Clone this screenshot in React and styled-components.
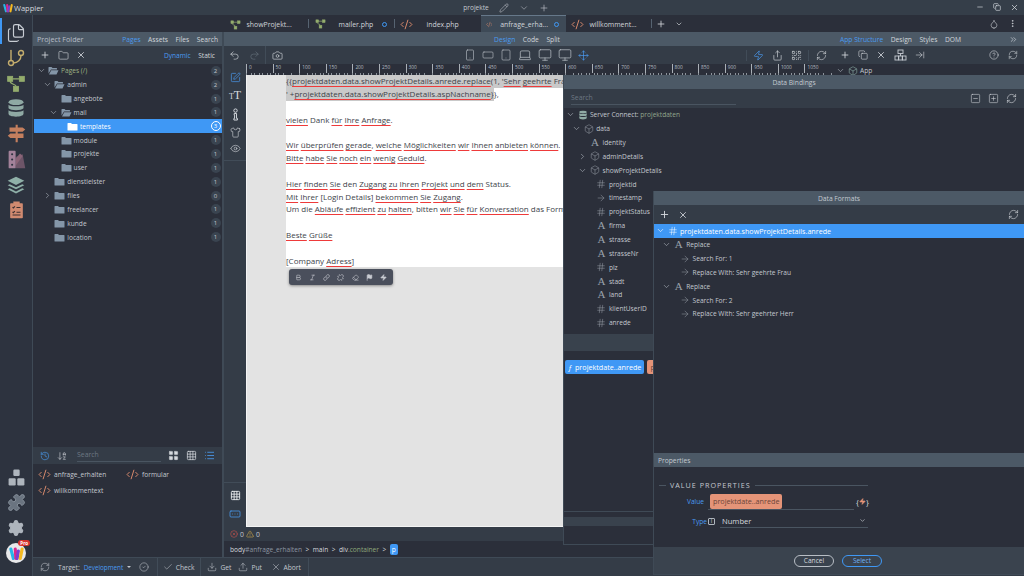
import React from "react";
import styled, { createGlobalStyle } from "styled-components";
import {
  Plus, X, ChevronDown, ChevronRight, Pencil, Minus, Copy, Droplet, EllipsisVertical, CodeXml,
  Undo2, Redo2, Camera, Smartphone, RectangleHorizontal, Tablet, Laptop, Monitor, Move, Zap,
  Share, QrCode, RefreshCw, CircleHelp, ArrowRightToLine, ChevronsRight, SquarePen, Shirt, Eye,
  Grid3x3, RectangleEllipsis, CircleX, TriangleAlert, History, ArrowDownAZ, LayoutGrid, List,
  Check, CircleCheck, Download, Upload, SquareMinus, SquarePlus, Box, Hash, ArrowRight, Bold,
  Italic, Link, Unlink, Eraser, Flag, Settings, Puzzle, Files, GitBranch, Folder,
} from "lucide-react";

const dark = "#2b2f3a";
const bar = "#343c47";
const head = "#4c5966";
const line = "#3f4a56";
const blue = "#3f98f5";
const salmon = "#e59478";
const soft = "#c3c8cf";

const GlobalStyle = createGlobalStyle`
  html, body {
    margin: 0;
    background: ${dark};
    font-family: "Open Sans", "Liberation Sans", sans-serif;
  }
`;

const Page = styled.div`
  position: relative;
  width: 1024px;
  height: 576px;
  overflow: hidden;
  display: flex;
  flex-direction: column;
  font-size: 6.6px;
  color: ${soft};
  background: ${dark};
`;

const TitleBar = styled.div`
  height: 15px;
  flex: none;
  background: #353e49;
  display: grid;
  grid-template-columns: 1fr auto 1fr;
  align-items: center;
  padding: 0 5px 0 3px;
`;

const Brand = styled.div`
  display: flex;
  align-items: center;
  gap: 1px;
  font-size: 7.5px;
  color: #d5d9de;
`;

const TitleCenter = styled.div`
  display: flex;
  align-items: center;
  gap: 10px;
  margin-right: 10px;
`;

const WinButtons = styled.div`
  display: flex;
  justify-content: flex-end;
  gap: 9px;
  color: #d5d9de;
`;

const Body = styled.div`
  flex: 1;
  min-height: 0;
  display: flex;
`;

const Rail = styled.div`
  width: 33px;
  flex: none;
  box-sizing: border-box;
  background: #2d333f;
  border-right: 1px solid ${line};
  display: flex;
  flex-direction: column;
  justify-content: space-between;
  align-items: center;
  padding: 8px 0 13px;
  position: relative;
`;

const RailGroup = styled.div`
  display: flex;
  flex-direction: column;
  align-items: center;
  gap: ${(p) => p.$gap}px;
`;

const RailMark = styled.div`
  position: absolute;
  left: 0;
  top: 3px;
  width: 1.5px;
  height: 26px;
  background: ${blue};
`;

const ProBadge = styled.span`
  position: absolute;
  right: -4px;
  top: -3px;
  background: #d8342f;
  color: #fff;
  border-radius: 4px;
  font-size: 4.5px;
  line-height: 6px;
  padding: 0 2px;
  font-weight: 700;
`;

const LogoDisc = styled.div`
  position: relative;
  width: 20px;
  height: 20px;
  border-radius: 50%;
  background: #e8e8ea;
  display: flex;
  align-items: center;
  justify-content: center;
`;

const Workspace = styled.div`
  flex: 1;
  min-width: 0;
  display: flex;
  flex-direction: column;
`;

const TabStrip = styled.div`
  height: 17px;
  flex: none;
  background: ${dark};
  display: flex;
  align-items: stretch;
  padding-left: 195px;
  font-size: 6.9px;
`;

const Tab = styled.div`
  width: ${(p) => p.$w}px;
  flex: none;
  box-sizing: border-box;
  display: flex;
  align-items: center;
  gap: 6px;
  padding-left: ${(p) => p.$lead ?? 3}px;
  color: #d2d6db;
  background: ${(p) => (p.$active ? "#3e4a57" : "transparent")};
  border-top: 1px solid ${(p) => (p.$active ? "#66788a" : "transparent")};
  white-space: nowrap;
  span {
    flex: 1;
    padding-left: ${(p) => p.$pad || 0}px;
  }
`;

const TabDot = styled.i`
  width: 3px;
  height: 3px;
  border-radius: 50%;
  border: 1px solid ${blue};
  margin-right: 7px;
  flex: none;
`;

const TabDivider = styled.i`
  width: 1px;
  height: 9px;
  align-self: center;
  background: #566371;
  flex: none;
  margin-right: ${(p) => p.$right || 0}px;
`;

const TabIcon = styled.span`
  display: flex;
  align-items: center;
  flex: none;
  margin-left: ${(p) => p.$left || 0}px;
  color: #d2d6db;
`;

const StripEnd = styled.div`
  display: flex;
  align-items: center;
  margin-left: auto;
  gap: 9px;
  padding-right: 7px;
  color: #d2d6db;
`;

const Panels = styled.div`
  flex: 1;
  min-height: 0;
  display: flex;
  background: ${line};
`;

const SidePanel = styled.div`
  width: ${(p) => p.$w}px;
  flex: none;
  display: flex;
  flex-direction: column;
  background: ${dark};
  margin-right: ${(p) => p.$right || 0}px;
`;

const HeadRow = styled.div`
  height: 14px;
  flex: none;
  background: ${head};
  display: flex;
  align-items: center;
  justify-content: ${(p) => p.$justify || "flex-start"};
  padding: 0 ${(p) => p.$pad ?? 4}px;
  gap: 7.5px;
  color: #c4cad1;
  font-size: 6.7px;
`;

const HeadTitle = styled.span`
  margin-right: auto;
  color: #b7bec6;
  font-size: 7.2px;
`;

const HeadLink = styled.span`
  color: ${(p) => (p.$on ? "#4a9bf0" : "#d2d6db")};
`;

const ToolRow = styled.div`
  height: ${(p) => p.$h ?? 18}px;
  flex: none;
  background: ${bar};
  display: flex;
  align-items: center;
  padding: 0 ${(p) => p.$pad ?? 7}px;
  gap: ${(p) => p.$gap ?? 8}px;
  color: #d5d9de;
`;

const Push = styled.div`
  margin-left: auto;
  display: flex;
  align-items: center;
  gap: ${(p) => p.$gap ?? 8}px;
`;

const TreeList = styled.div`
  flex: ${(p) => (p.$h ? "none" : 1)};
  height: ${(p) => (p.$h ? `${p.$h}px` : "auto")};
  overflow: hidden;
  padding-left: ${(p) => p.$left || 0}px;
`;

const Row = styled.div`
  height: 13.85px;
  display: flex;
  align-items: center;
  position: relative;
  white-space: nowrap;
  padding-left: ${(p) => p.$level * 6.3 + (p.$base || 0)}px;
  background: ${(p) => (p.$on ? blue : "transparent")};
  color: ${(p) => (p.$on ? "#fff" : soft)};
`;

const SelectedText = styled.span`
  font-size: 7.15px;
  padding-left: 1px;
`;

const Chev = styled.span`
  width: 12px;
  flex: none;
  display: flex;
  justify-content: center;
  color: ${(p) => (p.$on ? "#fff" : "#aeb5bd")};
`;

const Glyph = styled.span`
  width: 13px;
  flex: none;
  display: flex;
  justify-content: center;
  color: ${(p) => p.$color || "#9aa1aa"};
`;

const SerifA = styled.span`
  font-family: "Liberation Serif", serif;
  font-size: 11px;
  line-height: 11px;
`;

const RowText = styled.span`
  padding-left: 1px;
  color: ${(p) => p.$color || "inherit"};
`;

const CutOffTip = styled.div`
  width: 1.5px;
  height: 1.5px;
  margin: 4px 0 0 37px;
  background: #9aa1aa;
`;

const Count = styled.span`
  position: absolute;
  right: 1.5px;
  width: 10px;
  height: 10px;
  border-radius: 50%;
  background: ${(p) => (p.$on ? "transparent" : "#3a4450")};
  border: ${(p) => (p.$on ? "1px solid #fff" : "none")};
  box-sizing: border-box;
  display: flex;
  align-items: center;
  justify-content: center;
  font-size: 6px;
  color: ${(p) => (p.$on ? "#fff" : "#c3c8cf")};
`;

const FilterRow = styled(ToolRow)`
  height: 17px;
  padding: 0 7px;
  gap: 7px;
  margin-top: auto;
`;

const SearchBox = styled.div`
  width: ${(p) => p.$w}px;
  height: 13px;
  line-height: 12px;
  box-sizing: border-box;
  border-bottom: 1px solid #4a5561;
  color: #6d7783;
  font-size: 6.9px;
  margin-left: ${(p) => p.$left || 0}px;
`;

const FileGrid = styled.div`
  height: 93px;
  flex: none;
  box-sizing: border-box;
  padding: 2px 5px;
  display: grid;
  grid-template-columns: 88px 1fr;
  grid-auto-rows: 16.5px;
`;

const FileItem = styled.div`
  display: flex;
  align-items: center;
  gap: 3px;
  color: #c3c8cf;
`;

const Editor = styled.div`
  flex: 1;
  min-width: 0;
  display: flex;
  flex-direction: column;
  background: ${dark};
`;

const ModeRow = styled(HeadRow)`
  justify-content: center;
  padding-left: 0;
`;

const EditorTools = styled(ToolRow)`
  padding: 0;
  gap: 0;
  position: relative;
`;

const ToolCell = styled.div`
  display: flex;
  align-items: center;
  gap: ${(p) => p.$gap ?? 10}px;
  padding: 0 ${(p) => p.$pad ?? 6}px;
  height: 100%;
  color: ${(p) => p.$color || "inherit"};
  margin-left: ${(p) => p.$left || 0}px;
  border-right: ${(p) => (p.$sep ? "1px solid #414c58" : "none")};
  border-left: ${(p) => (p.$sepLeft ? "1px solid #414c58" : "none")};
`;

const EditorMain = styled.div`
  flex: 1;
  min-height: 0;
  display: flex;
`;

const ToolRail = styled.div`
  width: 22px;
  flex: none;
  background: ${bar};
  display: flex;
  flex-direction: column;
  align-items: center;
`;

const RailTop = styled.div`
  width: 100%;
  padding: 8px 0 6px;
  display: flex;
  flex-direction: column;
  align-items: center;
  gap: 5.5px;
  border-bottom: 1px solid #414c58;
`;

const RailBottom = styled.div`
  margin-top: auto;
  width: 100%;
  padding: 7px 0 7px;
  display: flex;
  flex-direction: column;
  align-items: center;
  gap: 7px;
  border-top: 1px solid #414c58;
`;

const TTMark = styled.span`
  font-family: "Liberation Serif", serif;
  color: #d5d9de;
  font-size: 12px;
  line-height: 12px;
  small {
    font-size: 8px;
  }
`;

const Stage = styled.div`
  flex: 1;
  min-width: 0;
  display: flex;
  flex-direction: column;
`;

const Ruler = styled.div`
  height: 11px;
  flex: none;
  display: flex;
  background: repeating-linear-gradient(90deg, #8d949c 0 0.6px, transparent 0.6px 2.66px) bottom / 100% 2px no-repeat ${dark};
`;

const RulerMark = styled.span`
  width: 26.6px;
  flex: none;
  box-sizing: border-box;
  border-left: 1px solid #aab0b7;
  padding-left: 2px;
  font-size: 4.8px;
  line-height: 7px;
  color: #b6bcc3;
  height: 9px;
`;

const Canvas = styled.div`
  flex: 1;
  min-height: 0;
  position: relative;
  overflow: hidden;
  background: #e3e3e3;
  border-left: 1px solid #f4f4f4;
  border-bottom: 1px solid #f4f4f4;
  padding-left: 39px;
`;

const DocPage = styled.div`
  height: 192px;
  width: 540px;
  background: #fff;
  box-sizing: border-box;
  color: #40434a;
  font-size: 8px;
  font-family: "Open Sans", sans-serif;
`;

const DocLine = styled.div`
  height: 12.85px;
  line-height: 12.85px;
  white-space: nowrap;
  width: ${(p) => p.$w || "auto"};
  background: ${(p) => (p.$sel ? "#c9c9c9" : "transparent")};
`;

const Spell = styled.span`
  text-decoration: underline solid #ee3a3a 1px;
  text-underline-offset: 1.5px;
`;

const FloatBar = styled.div`
  position: absolute;
  left: 42px;
  top: 194px;
  width: 104px;
  height: 16px;
  box-sizing: border-box;
  border-radius: 3px;
  background: #4a4f5c;
  box-shadow: 0 1px 3px rgba(0, 0, 0, 0.4);
  color: #c9ccd2;
  display: flex;
  align-items: center;
  justify-content: space-around;
  padding: 0 2px;
`;

const ErrorRow = styled.div`
  height: 14px;
  flex: none;
  background: ${bar};
  display: flex;
  align-items: center;
  gap: 2px;
  padding-left: 6px;
  font-size: 6.8px;
  color: #c3c8cf;
`;

const Crumbs = styled.div`
  height: 16px;
  flex: none;
  background: ${dark};
  display: flex;
  align-items: center;
  padding-left: 6px;
  gap: 3.5px;
  color: #d5d9de;
  white-space: nowrap;
`;

const CrumbId = styled.span`
  color: ${(p) => p.$color};
`;

const CrumbPill = styled.span`
  background: ${blue};
  color: #fff;
  border-radius: 2px;
  padding: 1px 2px;
  line-height: 9px;
`;

const BottomBar = styled.div`
  height: 19px;
  flex: none;
  background: ${bar};
  border-top: 1px solid ${line};
  box-sizing: border-box;
  display: flex;
  align-items: center;
  color: #c3c8cf;
  padding-left: 7px;
  font-size: 6.7px;
`;

const BarItem = styled.div`
  display: flex;
  align-items: center;
  height: 100%;
  gap: ${(p) => p.$gap ?? 3}px;
  padding-right: ${(p) => p.$right ?? 0}px;
  margin-left: ${(p) => p.$left ?? 0}px;
  border-right: ${(p) => (p.$sep ? "1px solid #414c58" : "none")};
`;

const Target = styled.span`
  color: #4a9bf0;
  font-size: 6.3px;
`;

const Caret = styled.i`
  width: 0;
  height: 0;
  border-left: 2px solid transparent;
  border-right: 2px solid transparent;
  border-top: 2.5px solid #c3c8cf;
`;

/* floating windows of the app */
const Dialog = styled.div`
  position: absolute;
  left: ${(p) => p.$left}px;
  top: ${(p) => p.$top}px;
  right: 0;
  height: ${(p) => p.$h}px;
  box-sizing: border-box;
  background: ${dark};
  border-left: 1px solid ${line};
  border-bottom: 1px solid ${line};
  display: flex;
  flex-direction: column;
`;

const DialogBand = styled.div`
  height: ${(p) => p.$h}px;
  flex: none;
  background: #39424d;
  margin-top: ${(p) => p.$top || 0}px;
`;

const PillRow = styled.div`
  height: 161px;
  flex: none;
  box-sizing: border-box;
  padding: 9px 2px 0 1px;
  display: flex;
  gap: 3px;
  overflow: hidden;
  border-bottom: 1px solid ${line};
`;

const Pill = styled.div`
  height: ${(p) => p.$h ?? 14}px;
  flex: none;
  border-radius: 2px;
  display: flex;
  align-items: center;
  padding: 0 3px;
  gap: 3px;
  background: ${(p) => (p.$salmon ? salmon : blue)};
  color: ${(p) => (p.$salmon ? "#6b4438" : "#fff")};
  white-space: nowrap;
  font-size: 7.2px;
`;

const Footer = styled.div`
  height: 27px;
  flex: none;
  background: #3a434e;
  display: flex;
  align-items: center;
  justify-content: center;
  gap: 8px;
  padding-right: 2px;
`;

const RoundBtn = styled.div`
  width: 40px;
  height: 12px;
  box-sizing: border-box;
  border-radius: 6px;
  border: 1px solid ${(p) => (p.$primary ? blue : "#b8bec5")};
  color: ${(p) => (p.$primary ? "#6fb2f5" : "#d5d9de")};
  font-size: 6.6px;
  display: flex;
  align-items: center;
  justify-content: center;
`;

const PropBody = styled.div`
  flex: 1;
  min-height: 0;
  padding: 13px 0 0 5px;
  width: 209px;
`;

const Legend = styled.div`
  display: flex;
  align-items: center;
  gap: 4px;
  font-size: 7.2px;
  letter-spacing: 1px;
  height: 10px;
  color: #c3c8cf;
  margin-bottom: 3px;
  &::before {
    content: "";
    width: 7px;
    height: 1px;
    background: #4a5561;
  }
  &::after {
    content: "";
    flex: 1;
    height: 1px;
    background: #4a5561;
  }
`;

const PropRow = styled.div`
  display: flex;
  align-items: center;
  height: ${(p) => p.$h}px;
  margin-top: ${(p) => p.$top || 0}px;
`;

const PropLabel = styled.span`
  width: ${(p) => p.$w}px;
  flex: none;
  text-align: right;
  color: #4a9bf0;
  padding-right: ${(p) => p.$right}px;
  box-sizing: border-box;
`;

const PropField = styled.div`
  flex: ${(p) => (p.$grow ? 1 : "none")};
  width: ${(p) => p.$w || "auto"};
  display: flex;
  align-items: center;
  height: 100%;
  box-sizing: border-box;
  border-bottom: 1px solid #4a5561;
  justify-content: space-between;
  color: #d5d9de;
  font-size: 7.6px;
  padding: 0 2px;
`;

const BraceIcon = styled.span`
  display: flex;
  align-items: center;
  color: #d5d9de;
  margin-left: 2px;
  font-size: 8px;
`;

const TypeBox = styled.span`
  width: 7px;
  height: 7px;
  border: 1px solid #aeb5bd;
  border-radius: 1px;
  box-sizing: border-box;
  font-size: 5px;
  line-height: 5px;
  text-align: center;
  margin-right: 5px;
  color: #d5d9de;
  flex: none;
`;

const WapplerMark = ({ size = 12 }) => (
  <svg width={size} height={size} viewBox="0 0 24 24">
    <path d="M3 5 L7 20" stroke="#27b5e8" strokeWidth="5" strokeLinecap="round" />
    <path d="M10 5 L11 20" stroke="#d9288c" strokeWidth="5" strokeLinecap="round" />
    <path d="M13 20 L15 8" stroke="#7a3fd0" strokeWidth="5" strokeLinecap="round" />
    <path d="M18 20 L21 5" stroke="#f4b920" strokeWidth="5" strokeLinecap="round" />
  </svg>
);

const NetworkIcon = ({ size = 20, color = "#94ad6d" }) => (
  <svg width={size} height={size} viewBox="0 0 24 24" fill={color} stroke={color}>
    <rect x="2" y="4" width="6" height="6" />
    <rect x="16" y="4" width="6" height="6" />
    <rect x="9" y="16" width="6" height="6" />
    <path d="M8 7h8M5 10c0 4 7 3 7 6" fill="none" strokeWidth="1.5" />
  </svg>
);

const StructureIcon = () => (
  <svg width="13" height="12" viewBox="0 0 26 24" fill="none" stroke="#c7ccd3" strokeWidth="1.8">
    <rect x="8" y="2" width="10" height="7" />
    <rect x="2" y="14" width="7" height="8" />
    <rect x="9.5" y="14" width="7" height="8" />
    <rect x="17" y="14" width="7" height="8" />
    <path d="M13 9v5" />
  </svg>
);

const DbIcon = ({ size = 20, color = "#8fa9a4" }) => (
  <svg width={size} height={size} viewBox="0 0 24 24" fill={color}>
    <ellipse cx="12" cy="5" rx="9" ry="3.5" />
    <path d="M3 8c2 2.4 16 2.4 18 0v4.4c-2 3-16 3-18 0zM3 14.8c2 2.6 16 2.6 18 0v4.2c0 2-4 3.5-9 3.5s-9-1.5-9-3.5z" />
  </svg>
);

const SignIcon = () => (
  <svg width="21" height="21" viewBox="0 0 24 24" fill="#c47f5e">
    <rect x="11" y="2" width="2.4" height="20" />
    <path d="M4 5h15l3 2.5-3 2.5H4zM20 12H5l-3 2.5L5 17h15z" />
  </svg>
);

const SwatchIcon = () => (
  <svg width="21" height="21" viewBox="0 0 24 24">
    <path d="M11 9l8-3 3 16H11z" fill="#6d5568" />
    <path d="M11 11l5-6 3 3-8 11z" fill="#8a6477" />
    <rect x="3" y="2" width="8" height="20" rx="1" fill="#a3829a" />
    <circle cx="7" cy="6" r="1.2" fill="#2d333f" />
    <circle cx="7" cy="12" r="1.2" fill="#2d333f" />
    <circle cx="7" cy="18" r="1.2" fill="#2d333f" />
  </svg>
);

const LayersIcon = () => (
  <svg width="20" height="20" viewBox="0 0 24 24" fill="#8fb0a8">
    <path d="M12 2l10 5-10 5L2 7z" />
    <path d="M4.5 11L12 14.8 19.5 11 22 12.2l-10 5-10-5z" />
    <path d="M4.5 16L12 19.8 19.5 16 22 17.2l-10 5-10-5z" />
  </svg>
);

const ClipIcon = () => (
  <svg width="19" height="19" viewBox="0 0 24 24" fill="#d08a70">
    <path d="M5 4h3V2h8v2h3a1 1 0 0 1 1 1v17a1 1 0 0 1-1 1H5a1 1 0 0 1-1-1V5a1 1 0 0 1 1-1z" />
    <path d="M7 9l1 1 2-2M7 15l1 1 2-2M12 9.5h5M12 15.5h5M7 19h10" stroke="#3a2f30" strokeWidth="1.4" fill="none" />
  </svg>
);

const CubesIcon = () => (
  <svg width="19" height="19" viewBox="0 0 24 24" fill="#aeb5bd">
    <rect x="8" y="2" width="8" height="8" rx="1.5" />
    <rect x="2" y="13" width="9" height="9" rx="1.5" />
    <rect x="13" y="13" width="9" height="9" rx="1.5" />
  </svg>
);

const FolderIcon = ({ open, color = "#8496a8" }) => (
  <svg width="11" height="9" viewBox="0 0 22 18" fill={color}>
    {open ? (
      <path d="M1 3a1 1 0 0 1 1-1h5l2 2h8a1 1 0 0 1 1 1v2H6L1 15zM6.5 8.5H21L17 17H2z" />
    ) : (
      <path d="M1 3a1 1 0 0 1 1-1h6l2 2h10a1 1 0 0 1 1 1v11a1 1 0 0 1-1 1H2a1 1 0 0 1-1-1z" />
    )}
  </svg>
);

const InfoTall = () => (
  <svg width="11" height="13" viewBox="0 0 14 20" fill="none" stroke="#d5d9de" strokeWidth="1.5">
    <circle cx="7" cy="4" r="2.6" />
    <path d="M5 8.5h3.6V16H10v2.5H4.5V16H5.6v-5H5z" />
  </svg>
);

const Code = ({ size = 13 }) => <CodeXml size={size} color="#d98a6c" strokeWidth={1.8} />;

const projectTree = [
  { level: 0, name: "Pages (/)", open: true, chev: "d", count: 2, color: "#9fb384" },
  { level: 1, name: "admin", open: true, chev: "d", count: 2 },
  { level: 2, name: "angebote", count: 1 },
  { level: 2, name: "mail", open: true, chev: "d", count: 1 },
  { level: 3, name: "templates", count: 3, on: true },
  { level: 2, name: "module", count: 1 },
  { level: 2, name: "projekte", count: 1 },
  { level: 2, name: "user", count: 1 },
  { level: 1, name: "dienstleister", count: 1 },
  { level: 1, name: "files", chev: "r", count: 0 },
  { level: 1, name: "freelancer", count: 1 },
  { level: 1, name: "kunde", count: 1 },
  { level: 1, name: "location", count: 1 },
];

const bindingTree = [
  { level: 1, kind: "cube", chev: "d", name: "data" },
  { level: 2, kind: "A", name: "identity" },
  { level: 2, kind: "cube", chev: "r", name: "adminDetails" },
  { level: 2, kind: "cube", chev: "d", name: "showProjektDetails" },
  { level: 3, kind: "#", name: "projektid" },
  { level: 3, kind: ">", name: "timestamp" },
  { level: 3, kind: "#", name: "projektStatus" },
  { level: 3, kind: "A", name: "firma" },
  { level: 3, kind: "A", name: "strasse" },
  { level: 3, kind: "A", name: "strasseNr" },
  { level: 3, kind: "#", name: "plz" },
  { level: 3, kind: "A", name: "stadt" },
  { level: 3, kind: "A", name: "land" },
  { level: 3, kind: "#", name: "klientUserID" },
  { level: 3, kind: "#", name: "anrede" },
];

const formatTree = [
  { level: 1, kind: "A", chev: "d", name: "Replace" },
  { level: 2, kind: ">", name: "Search For: 1" },
  { level: 2, kind: ">", name: "Replace With: Sehr geehrte Frau" },
  { level: 1, kind: "A", chev: "d", name: "Replace" },
  { level: 2, kind: ">", name: "Search For: 2" },
  { level: 2, kind: ">", name: "Replace With: Sehr geehrter Herr" },
];

const docLines = [
  { text: "{{*projektdaten.data.showProjektDetails.anrede.replace*(1, '*Sehr* *geehrte* Frau').replace(2, 'Sehr geehrter Herr')", sel: true, w: "100%" },
  { text: "' +*projektdaten.data.showProjektDetails.aspNachname*}},", sel: true, w: "208px" },
  { text: "" },
  { text: "*vielen* Dank *für* *Ihre* *Anfrage*." },
  { text: "" },
  { text: "*Wir* *überprüfen* *gerade*, *welche* *Möglichkeiten* *wir* *Ihnen* *anbieten* *können*." },
  { text: "*Bitte* *habe* *Sie* *noch* *ein* *wenig* *Geduld*." },
  { text: "" },
  { text: "*Hier* *finden* *Sie* den *Zugang* *zu* *Ihren* *Projekt* *und* *dem* Status." },
  { text: "*Mit* *Ihrer* [Login Details] *bekommen* *Sie* *Zugang*." },
  { text: "Um die *Abläufe* *effizient* *zu* *halten*, bitten *wir* *Sie* *für* *Konversation* das Formular." },
  { text: "" },
  { text: "*Beste* *Grüße*" },
  { text: "" },
  { text: "[Company *Adress*]" },
];

const rulerMarks = Array.from({ length: 22 }, (_, i) => i * 50);

const kindIcon = (kind) => {
  if (kind === "A") return <SerifA>A</SerifA>;
  if (kind === "#") return <Hash size={10} strokeWidth={1.2} />;
  if (kind === ">") return <ArrowRight size={10} strokeWidth={1.2} />;
  return <Box size={10} strokeWidth={1.2} />;
};

const chevron = (chev, on) => (
  <Chev $on={on}>
    {chev === "d" && <ChevronDown size={9} strokeWidth={1.6} />}
    {chev === "r" && <ChevronRight size={9} strokeWidth={1.6} />}
  </Chev>
);

const SpellText = ({ text }) =>
  text.split("*").map((part, i) => (i % 2 ? <Spell key={i}>{part}</Spell> : part));

const DataTree = ({ rows }) =>
  rows.map((row, i) => (
    <Row key={i} $level={row.level}>
      {chevron(row.chev)}
      <Glyph>{kindIcon(row.kind)}</Glyph>
      <RowText>{row.name}</RowText>
    </Row>
  ));

const App = () => {
  return (
    <Page>
      <GlobalStyle />
      <TitleBar>
        <Brand>
          <WapplerMark size={10} />
          Wappler
        </Brand>
        <TitleCenter>
          <span>projekte</span>
          <Pencil size={10} strokeWidth={1.3} />
          <ChevronDown size={10} strokeWidth={1.3} />
          <Plus size={10} strokeWidth={1.5} />
        </TitleCenter>
        <WinButtons>
          <Minus size={8} />
          <Copy size={8} />
          <X size={9} />
        </WinButtons>
      </TitleBar>
      <Body>
        <Rail>
          <RailMark />
          <RailGroup $gap={5}>
            <Files size={20} color="#c7ccd3" strokeWidth={1.4} />
            <GitBranch size={20} color="#c4ad6d" strokeWidth={1.7} />
            <NetworkIcon />
            <DbIcon />
            <SignIcon />
            <SwatchIcon />
            <LayersIcon />
            <ClipIcon />
          </RailGroup>
          <RailGroup $gap={6.5}>
            <CubesIcon />
            <Puzzle size={19} color="#8a939e" fill="#6a7480" strokeWidth={1.2} />
            <Settings size={18} color="#aeb5bd" fill="#aeb5bd" strokeWidth={1.4} />
            <LogoDisc>
              <WapplerMark size={15} />
              <ProBadge>Pro</ProBadge>
            </LogoDisc>
          </RailGroup>
        </Rail>
        <Workspace>
          <TabStrip>
            <Tab $w={80} $lead={1.5}><NetworkIcon size={11} /><span>showProjekt...</span></Tab>
            <TabDivider />
            <TabIcon $left={6}><NetworkIcon size={11} /></TabIcon>
            <Tab $w={68} $lead={0} $pad={12.5}><span>mailer.php</span><TabDot /></Tab>
            <TabDivider $right={4} />
            <Tab $w={82} $lead={0.5} $pad={8}><Code /><span>index.php</span></Tab>
            <Tab $w={85} $active $lead={4.5} $pad={2}><Code /><span>anfrage_erha...</span><TabDot /></Tab>
            <Tab $w={85} $lead={4.5}><Code /><span>willkomment...</span></Tab>
            <TabDivider />
            <TabIcon $left={4}><Plus size={10} /></TabIcon>
            <TabIcon $left={9}><ChevronDown size={8} /></TabIcon>
            <StripEnd>
              <Droplet size={10} strokeWidth={1.4} />
              <EllipsisVertical size={9} />
            </StripEnd>
          </TabStrip>
          <Panels>
            <SidePanel $w={189} $right={2}>
              <HeadRow>
                <HeadTitle>Project Folder</HeadTitle>
                <HeadLink $on>Pages</HeadLink>
                <HeadLink>Assets</HeadLink>
                <HeadLink>Files</HeadLink>
                <HeadLink>Search</HeadLink>
              </HeadRow>
              <ToolRow $gap={7.5}>
                <Plus size={10} />
                <Folder size={11} strokeWidth={1.3} />
                <X size={10} />
                <Push $gap={7.5}>
                  <HeadLink $on>Dynamic</HeadLink>
                  <HeadLink>Static</HeadLink>
                </Push>
              </ToolRow>
              <TreeList $left={1}>
                {projectTree.map((row) => (
                  <Row key={row.name} $level={row.level} $on={row.on} $base={1}>
                    {chevron(row.chev)}
                    <Glyph>
                      <FolderIcon open={row.open} color={row.on ? "#fff" : "#8496a8"} />
                    </Glyph>
                    <RowText $color={row.color}>{row.name}</RowText>
                    <Count $on={row.on}>{row.count}</Count>
                  </Row>
                ))}
              </TreeList>
              <FilterRow>
                <History size={10} color="#4a9bf0" strokeWidth={1.5} />
                <ArrowDownAZ size={10} strokeWidth={1.4} />
                <SearchBox $w={84} $left={3}>Search</SearchBox>
                <Push $gap={7}>
                  <LayoutGrid size={11} fill="#d5d9de" strokeWidth={1} />
                  <Grid3x3 size={11} strokeWidth={1.6} />
                  <List size={11} color="#4a9bf0" strokeWidth={1.8} />
                </Push>
              </FilterRow>
              <FileGrid>
                <FileItem><Code /><span>anfrage_erhalten</span></FileItem>
                <FileItem><Code /><span>formular</span></FileItem>
                <FileItem><Code /><span>willkommentext</span></FileItem>
              </FileGrid>
            </SidePanel>
            <Editor>
              <ModeRow>
                <HeadLink $on>Design</HeadLink>
                <HeadLink>Code</HeadLink>
                <HeadLink>Split</HeadLink>
              </ModeRow>
              <EditorTools>
                <ToolCell $sep $pad={5} $gap={9}>
                  <Undo2 size={11} strokeWidth={1.4} />
                  <Redo2 size={11} strokeWidth={1.4} color="#66707c" />
                </ToolCell>
                <ToolCell $pad={6}>
                  <Camera size={11} strokeWidth={1.4} />
                </ToolCell>
                <ToolCell $left={175} $pad={0} $gap={6} $color="#b4bac1">
                  <Smartphone size={12} strokeWidth={1.3} />
                  <RectangleHorizontal size={12} strokeWidth={1.3} />
                  <Tablet size={12} strokeWidth={1.3} />
                  <Laptop size={14} strokeWidth={1.3} />
                  <Monitor size={14} strokeWidth={1.3} />
                  <Monitor size={14} strokeWidth={1.3} />
                  <Move size={11} color="#4a9bf0" strokeWidth={1.5} />
                </ToolCell>
                <Push $gap={0}>
                  <ToolCell $sepLeft $pad={6} $gap={8}>
                    <Zap size={11} color="#4a9bf0" strokeWidth={1.5} />
                    <Share size={11} strokeWidth={1.4} />
                    <QrCode size={11} strokeWidth={1.4} />
                  </ToolCell>
                  <ToolCell $sepLeft $pad={7}>
                    <RefreshCw size={11} strokeWidth={1.3} />
                  </ToolCell>
                </Push>
              </EditorTools>
              <EditorMain>
                <ToolRail>
                  <RailTop>
                    <SquarePen size={11} color="#4a9bf0" strokeWidth={1.5} />
                    <TTMark><small>T</small>T</TTMark>
                    <InfoTall />
                    <Shirt size={11} strokeWidth={1.3} color="#d5d9de" />
                    <Eye size={11} strokeWidth={1.3} color="#d5d9de" />
                  </RailTop>
                  <RailBottom>
                    <Grid3x3 size={11} color="#e6e8ea" strokeWidth={2} />
                    <RectangleEllipsis size={12} color="#4a9bf0" strokeWidth={1.5} />
                  </RailBottom>
                </ToolRail>
                <Stage>
                  <Ruler>
                    {rulerMarks.map((mark) => (
                      <RulerMark key={mark}>{mark}</RulerMark>
                    ))}
                  </Ruler>
                  <Canvas>
                    <DocPage>
                      {docLines.map((item, i) => (
                        <DocLine key={i} $sel={item.sel} $w={item.w}>
                          <SpellText text={item.text} />
                        </DocLine>
                      ))}
                    </DocPage>
                    <FloatBar>
                      <Bold size={7} strokeWidth={2} />
                      <Italic size={7} strokeWidth={2} />
                      <Link size={7} strokeWidth={2} />
                      <Unlink size={7} strokeWidth={2} />
                      <Eraser size={7} strokeWidth={2} />
                      <Flag size={7} fill="#c9ccd2" strokeWidth={2} />
                      <Zap size={7} fill="#c9ccd2" strokeWidth={2} />
                    </FloatBar>
                  </Canvas>
                </Stage>
              </EditorMain>
              <ErrorRow>
                <CircleX size={8} color="#e0574f" strokeWidth={1.5} />
                <span>0</span>
                <TriangleAlert size={8} color="#e8b84a" strokeWidth={1.5} />
                <span>0</span>
              </ErrorRow>
              <Crumbs>
                <span>body<CrumbId $color="#8c96a2">#anfrage_erhalten</CrumbId></span>
                <span>&gt;</span>
                <span>main</span>
                <span>&gt;</span>
                <span>div<CrumbId $color="#8fa97a">.container</CrumbId></span>
                <span>&gt;</span>
                <CrumbPill>p</CrumbPill>
              </Crumbs>
            </Editor>
            <SidePanel $w={190}>
              <HeadRow $pad={6}>
                <HeadLink $on>App Structure</HeadLink>
                <HeadLink>Design</HeadLink>
                <HeadLink>Styles</HeadLink>
                <HeadLink>DOM</HeadLink>
                <Push><ChevronsRight size={9} /></Push>
              </HeadRow>
              <ToolRow $pad={6} $gap={8}>
                <Plus size={10} />
                <Copy size={10} strokeWidth={1.4} />
                <X size={10} />
                <StructureIcon />
                <ArrowRightToLine size={10} strokeWidth={1.4} />
                <Push $gap={9}>
                  <CircleHelp size={10} strokeWidth={1.4} />
                  <RefreshCw size={10} strokeWidth={1.3} />
                </Push>
              </ToolRow>
              <Row $level={0} $base={0}>
                {chevron("d")}
                <Glyph $color="#8fb0a8"><Box size={10} strokeWidth={1.4} /></Glyph>
                <RowText>App</RowText>
              </Row>
            </SidePanel>
          </Panels>
          <BottomBar>
            <BarItem $gap={8} $sep $right={8}>
              <RefreshCw size={10} strokeWidth={1.3} />
              <BarItem $gap={4}>
                <span>Target:</span>
                <Target>Development</Target>
                <Caret />
              </BarItem>
              <CircleCheck size={10} strokeWidth={1.3} />
            </BarItem>
            <BarItem $left={5} $sep $right={6} $gap={2.5}>
              <Check size={10} strokeWidth={1.3} />
              <span>Check</span>
            </BarItem>
            <BarItem $left={6}>
              <Download size={10} strokeWidth={1.3} />
              <span>Get</span>
            </BarItem>
            <BarItem $left={7}>
              <Upload size={10} strokeWidth={1.3} />
              <span>Put</span>
            </BarItem>
            <BarItem $left={9} $sep $right={7} $gap={2.5}>
              <X size={10} strokeWidth={1.3} />
              <span>Abort</span>
            </BarItem>
          </BottomBar>
        </Workspace>
      </Body>

      <Dialog $left={563} $top={75} $h={470}>
        <HeadRow $justify="center">Data Bindings</HeadRow>
        <ToolRow $h={19} $pad={7} $gap={7}>
          <SearchBox $w={165}>Search</SearchBox>
          <Push $gap={7}>
            <SquareMinus size={11} strokeWidth={1.2} />
            <SquarePlus size={11} strokeWidth={1.2} />
            <RefreshCw size={11} strokeWidth={1.3} />
          </Push>
        </ToolRow>
        <TreeList $h={226}>
          <Row $level={0}>
            {chevron("d")}
            <Glyph $color="#8fa9a4"><DbIcon size={10} /></Glyph>
            <RowText>Server Connect: <CrumbId $color="#92a78d">projektdaten</CrumbId></RowText>
          </Row>
          <DataTree rows={bindingTree} />
          <CutOffTip />
        </TreeList>
        <DialogBand $h={17} />
        <PillRow>
          <Pill><i>ƒ</i> projektdate..anrede</Pill>
          <Pill $salmon>projektdate..anrede</Pill>
        </PillRow>
        <DialogBand $h={9} $top={5} />
      </Dialog>

      <Dialog $left={653} $top={191} $h={384}>
        <HeadRow $justify="center">Data Formats</HeadRow>
        <ToolRow $h={19} $pad={5} $gap={8}>
          <Plus size={11} />
          <X size={10} />
          <Push><RefreshCw size={11} strokeWidth={1.3} /></Push>
        </ToolRow>
        <TreeList $h={229}>
          <Row $level={0} $on>
            {chevron("d", true)}
            <Glyph $color="#fff"><Hash size={10} strokeWidth={1.3} /></Glyph>
            <SelectedText>projektdaten.data.showProjektDetails.anrede</SelectedText>
          </Row>
          <DataTree rows={formatTree} />
        </TreeList>
        <HeadRow>Properties</HeadRow>
        <PropBody>
          <Legend>VALUE PROPERTIES</Legend>
          <PropRow $h={17}>
            <PropLabel $w={49} $right={4}>Value</PropLabel>
            <PropField $w="146px">
              <Pill $salmon $h={15}>projektdate..anrede</Pill>
            </PropField>
            <BraceIcon>&#123;<Zap size={7} color={salmon} fill={salmon} />&#125;</BraceIcon>
          </PropRow>
          <PropRow $h={14} $top={4}>
            <PropLabel $w={49} $right={1}>Type</PropLabel>
            <TypeBox>I</TypeBox>
            <PropField $grow>
              Number
              <ChevronDown size={7} />
            </PropField>
          </PropRow>
        </PropBody>
        <Footer>
          <RoundBtn>Cancel</RoundBtn>
          <RoundBtn $primary>Select</RoundBtn>
        </Footer>
      </Dialog>
    </Page>
  );
};

export default App;
